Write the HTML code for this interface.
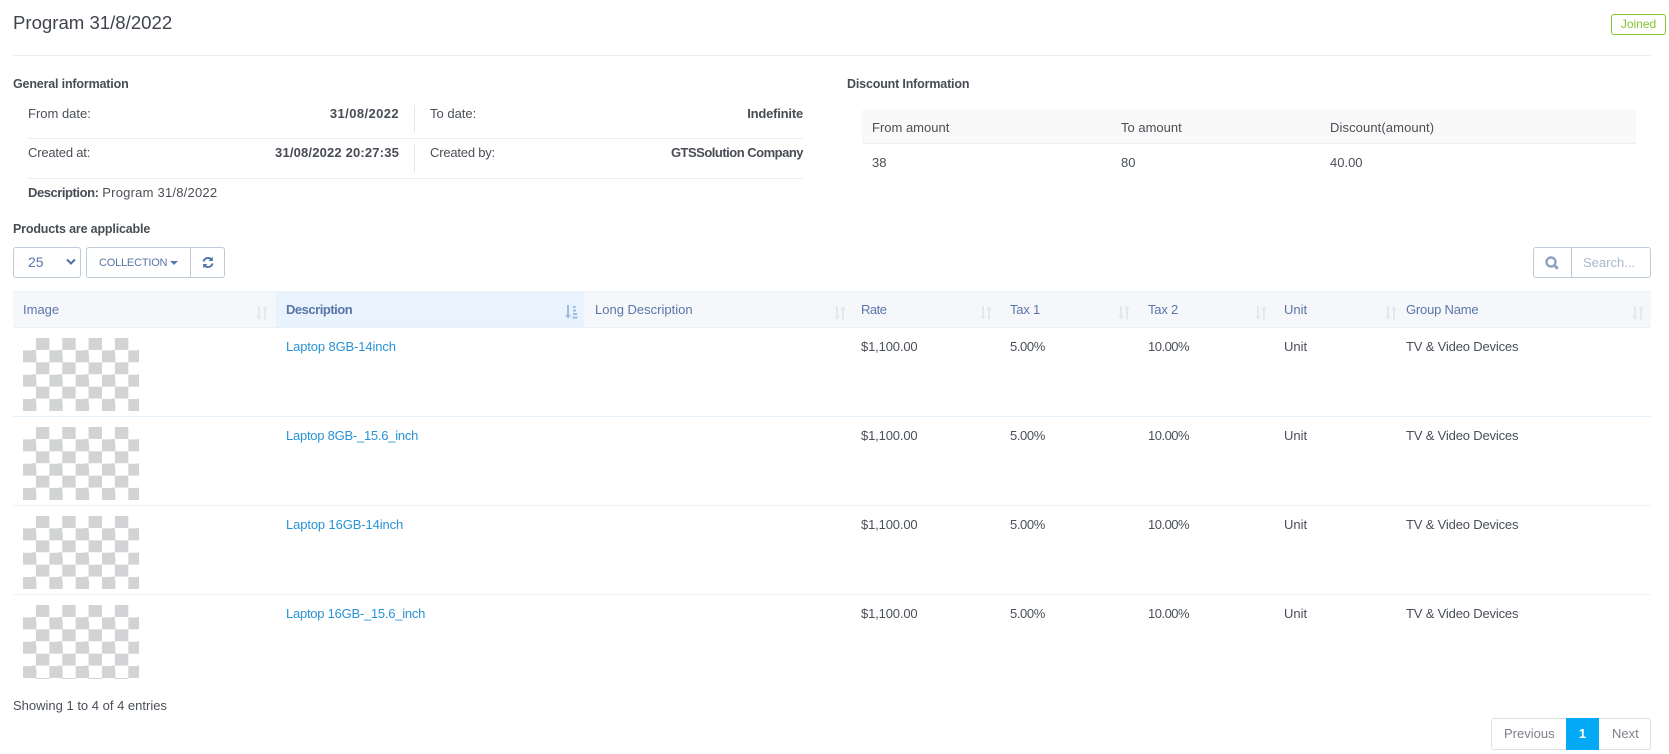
<!DOCTYPE html>
<html lang="en"><head><meta charset="utf-8"><title>Program 31/8/2022</title>
<style>
html,body{margin:0;padding:0;background:#fff;width:1669px;height:754px;overflow:hidden}
body{position:relative;font-family:"Liberation Sans",Arial,sans-serif;font-size:13px;color:#4a4f57}
.t{position:absolute;white-space:nowrap;line-height:16px}
.b{position:absolute;box-sizing:border-box}
.r{text-align:right}
.bd{font-weight:bold;color:#484d55}
.hd{color:#5a76a8}
.lk{color:#2a93d5}
.sn{letter-spacing:-.17px}
.p{letter-spacing:-.4px}
.q{letter-spacing:-.5px}
.m{letter-spacing:-.15px}
.img{position:absolute;left:23px;width:116px;height:73px;background-color:#fff;
background-image:conic-gradient(#d2d3d4 25%,transparent 0 50%,#d2d3d4 0 75%,transparent 0);
background-size:26.34px 24.34px;background-position:0 0}
.s{position:absolute;top:306px}
</style></head><body>
<div class="t" style="left:13px;top:12px;font-size:18.6px;line-height:22px;color:#3f444c">Program 31/8/2022</div>
<div class="b" style="left:1611px;top:14px;width:55px;height:21px;border:1px solid #84c529;border-radius:3px;color:#84c529;font-size:12px;line-height:19px;text-align:center">Joined</div>
<div class="b" style="left:13px;top:55px;width:1638px;height:1px;background:#ececec"></div>

<div class="t bd sn" style="left:13px;top:76px;font-size:12.5px">General information</div>
<div class="t" style="left:28px;top:106px">From date:</div>
<div class="t bd r" style="right:1270px;top:106px;letter-spacing:.4px">31/08/2022</div>
<div class="b" style="left:414px;top:105px;width:1px;height:28px;background:#e6e6e6"></div>
<div class="t" style="left:430px;top:106px">To date:</div>
<div class="t bd r" style="right:866px;top:106px;letter-spacing:-.2px">Indefinite</div>
<div class="b" style="left:28px;top:138px;width:775px;height:1px;background:#ececec"></div>
<div class="t" style="left:28px;top:145px;letter-spacing:-.2px">Created at:</div>
<div class="t bd r" style="right:1270px;top:145px;letter-spacing:.17px">31/08/2022 20:27:35</div>
<div class="b" style="left:414px;top:144px;width:1px;height:29px;background:#e6e6e6"></div>
<div class="t" style="left:430px;top:145px;letter-spacing:-.2px">Created by:</div>
<div class="t bd r" style="right:866px;top:145px;letter-spacing:-.5px">GTSSolution Company</div>
<div class="b" style="left:28px;top:178px;width:775px;height:1px;background:#ececec"></div>
<div class="t" style="left:28px;top:185px;letter-spacing:.22px"><b class="bd" style="letter-spacing:-.45px">Description:</b> Program 31/8/2022</div>

<div class="t bd sn" style="left:847px;top:76px;font-size:12.5px">Discount Information</div>
<div class="b" style="left:862px;top:110px;width:774px;height:34px;background:#f9f9f9;border-bottom:1px solid #e8eff6"></div>
<div class="t" style="left:872px;top:120px">From amount</div>
<div class="t" style="left:1121px;top:120px">To amount</div>
<div class="t" style="left:1330px;top:120px;letter-spacing:.1px">Discount(amount)</div>
<div class="t" style="left:872px;top:155px">38</div>
<div class="t" style="left:1121px;top:155px">80</div>
<div class="t" style="left:1330px;top:155px">40.00</div>

<div class="t bd sn" style="left:13px;top:221px;font-size:12.5px">Products are applicable</div>
<div class="b" style="left:13px;top:247px;width:68px;height:31px;border:1px solid #bfcbd9;border-radius:3px"></div>
<div class="t hd" style="left:28px;top:254px;font-size:14px">25</div>
<svg class="b" style="left:66px;top:258px" width="10" height="8" viewBox="0 0 10 8"><path d="M1 1.500 L5 5.500 L9 1.500" fill="none" stroke="#4c6fa5" stroke-width="2"/></svg>
<div class="b" style="left:86px;top:247px;width:139px;height:31px;border:1px solid #bfcbd9;border-radius:3px"></div>
<div class="b" style="left:190px;top:247px;width:1px;height:31px;background:#bfcbd9"></div>
<div class="t hd" style="left:99px;top:255px;font-size:11px;letter-spacing:-.2px">COLLECTION</div>
<svg class="b" style="left:170px;top:261px" width="9" height="5" viewBox="0 0 9 5"><path d="M0 0 H8 L4 4 Z" fill="#5a76a8"/></svg>
<svg class="b" style="left:202px;top:256px" width="12" height="13" viewBox="0 0 12 13"><path d="M1.500 5.500 A4.600 4.600 0 0 1 9.500 3.600 M10.500 7.500 A4.600 4.600 0 0 1 2.500 9.400" fill="none" stroke="#4c6fa5" stroke-width="1.800"/><path d="M10.800 .8 V5 H6.600 Z M1.200 12.200 V8 H5.400 Z" fill="#4c6fa5"/></svg>

<div class="b" style="left:1533px;top:247px;width:118px;height:31px;border:1px solid #bfcbd9;border-radius:3px"></div>
<div class="b" style="left:1571px;top:247px;width:1px;height:31px;background:#bfcbd9"></div>
<svg class="b" style="left:1545px;top:256px" width="14" height="14" viewBox="0 0 14 14"><circle cx="6" cy="6" r="4.500" fill="none" stroke="#8ea3bf" stroke-width="2.400"/><path d="M9.200 9.200 L12.800 12.800" stroke="#8ea3bf" stroke-width="2.800"/></svg>
<div class="t" style="left:1583px;top:255px;color:#a9b8cc">Search...</div>

<div class="b" style="left:13px;top:291px;width:1638px;height:37px;background:#f6f7fa;border-top:1px solid #eef3f9;border-bottom:1px solid #e8eff8"></div>
<div class="b" style="left:276px;top:292px;width:308px;height:35px;background:#e8f3fd"></div>
<div class="t hd" style="left:23px;top:302px">Image</div>
<div class="t hd" style="left:286px;top:302px;font-weight:bold;letter-spacing:-.48px">Description</div>
<div class="t hd" style="left:595px;top:302px">Long Description</div>
<div class="t hd" style="left:861px;top:302px;letter-spacing:-.5px">Rate</div>
<div class="t hd" style="left:1010px;top:302px;letter-spacing:-.2px">Tax 1</div>
<div class="t hd" style="left:1148px;top:302px;letter-spacing:-.2px">Tax 2</div>
<div class="t hd" style="left:1284px;top:302px">Unit</div>
<div class="t hd" style="left:1406px;top:302px;letter-spacing:-.2px">Group Name</div>

<svg width="0" height="0" style="position:absolute"><defs><g id="so" fill="#e3e8ef"><path d="M3 0h2v10h2l-3 3.500-3-3.500h2z"/><path d="M9 3.500l3-3.500 3 3.500h-2v10h-2v-10z" transform="translate(-2 0)"/></g></defs></svg>
<svg class="s" style="left:255px" width="13" height="14"><use href="#so"/></svg>
<svg class="s" style="left:833px" width="13" height="14"><use href="#so"/></svg>
<svg class="s" style="left:979px" width="13" height="14"><use href="#so"/></svg>
<svg class="s" style="left:1117px" width="13" height="14"><use href="#so"/></svg>
<svg class="s" style="left:1254px" width="13" height="14"><use href="#so"/></svg>
<svg class="s" style="left:1384px" width="13" height="14"><use href="#so"/></svg>
<svg class="s" style="left:1631px" width="13" height="14"><use href="#so"/></svg>
<svg class="s" style="left:564px;top:305px" width="14" height="14" viewBox="0 0 14 14" fill="#9dbbe0"><path d="M3 0h2v10h2l-3 3.500-3-3.500h2z"/><path d="M9 1h2.500v2H9zM9 4.500h3v2H9zM9 8h4v2H9zM8.500 11.500h5v2h-5z"/></svg>

<div class="img" style="top:338px"></div>
<div class="t lk" style="left:286px;top:339px;letter-spacing:-.13px">Laptop 8GB-14inch</div>
<div class="t m" style="left:861px;top:339px">$1,100.00</div><div class="t p" style="left:1010px;top:339px">5.00%</div><div class="t q" style="left:1148px;top:339px">10.00%</div><div class="t" style="left:1284px;top:339px">Unit</div><div class="t sn" style="left:1406px;top:339px">TV &amp; Video Devices</div>
<div class="b" style="left:13px;top:416px;width:1638px;height:1px;background:#e8f2fb"></div>

<div class="img" style="top:427px"></div>
<div class="t lk" style="left:286px;top:428px;letter-spacing:-.25px">Laptop 8GB-_15.6_inch</div>
<div class="t m" style="left:861px;top:428px">$1,100.00</div><div class="t p" style="left:1010px;top:428px">5.00%</div><div class="t q" style="left:1148px;top:428px">10.00%</div><div class="t" style="left:1284px;top:428px">Unit</div><div class="t sn" style="left:1406px;top:428px">TV &amp; Video Devices</div>
<div class="b" style="left:13px;top:505px;width:1638px;height:1px;background:#e8f2fb"></div>

<div class="img" style="top:516px"></div>
<div class="t lk" style="left:286px;top:517px;letter-spacing:-.12px">Laptop 16GB-14inch</div>
<div class="t m" style="left:861px;top:517px">$1,100.00</div><div class="t p" style="left:1010px;top:517px">5.00%</div><div class="t q" style="left:1148px;top:517px">10.00%</div><div class="t" style="left:1284px;top:517px">Unit</div><div class="t sn" style="left:1406px;top:517px">TV &amp; Video Devices</div>
<div class="b" style="left:13px;top:594px;width:1638px;height:1px;background:#e8f2fb"></div>

<div class="img" style="top:605px;height:74px"></div>
<div class="t lk" style="left:286px;top:606px;letter-spacing:-.25px">Laptop 16GB-_15.6_inch</div>
<div class="t m" style="left:861px;top:606px">$1,100.00</div><div class="t p" style="left:1010px;top:606px">5.00%</div><div class="t q" style="left:1148px;top:606px">10.00%</div><div class="t" style="left:1284px;top:606px">Unit</div><div class="t sn" style="left:1406px;top:606px">TV &amp; Video Devices</div>

<div class="t" style="left:13px;top:698px">Showing 1 to 4 of 4 entries</div>

<div class="b" style="left:1491px;top:718px;width:160px;height:32px;border:1px solid #e0e0e0;border-radius:3px"></div>
<div class="b" style="left:1566px;top:718px;width:33px;height:32px;background:#03a9f4;color:#fff;text-align:center;line-height:32px;font-weight:bold">1</div>
<div class="t" style="left:1504px;top:726px;color:#7d8288">Previous</div>
<div class="t" style="left:1612px;top:726px;color:#7d8288">Next</div>
</body></html>
